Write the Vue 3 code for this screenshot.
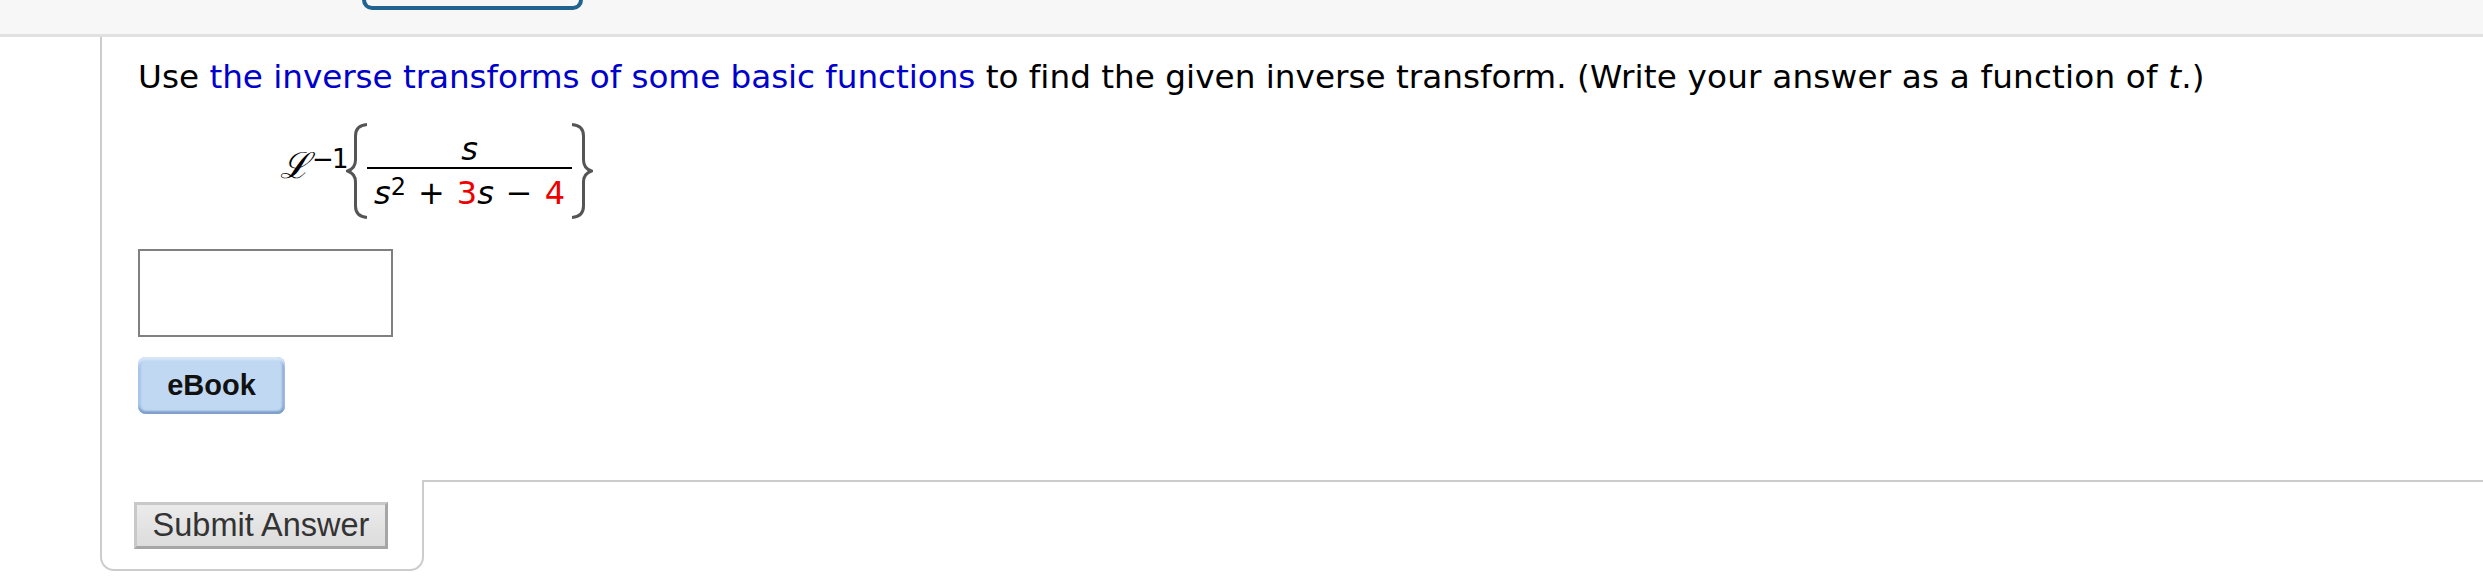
<script setup>
// question panel, static content
const link = 'the inverse transforms of some basic functions'
</script>

<template>
  <div class="page">
    <div class="topbar">
      <div class="tab"></div>
    </div>

    <div class="body">
      <p class="question">
        Use <a class="link">{{ link }}</a> to find the given inverse transform. <span class="hint">(Write your answer as a function of <i>t</i>.)</span>
      </p>

      <div class="math">
        <span class="script">ℒ</span>
        <span class="sup"><span class="minus">−</span><span class="one">1</span></span>
        <svg class="brace" width="22" height="96" viewBox="0 0 22 96">
          <path d="M21 1.5C14 2 9.5 5 9.5 13V37C9.5 43 6 46.5 1.5 48C6 49.5 9.5 53 9.5 59V83C9.5 91 14 94 21 94.5" />
        </svg>
        <div class="fraction">
          <div class="num"><i>s</i></div>
          <div class="den">
            <i>s</i><sup>2</sup><span class="op plus">+</span><span class="red">3</span><i>s</i><span class="op">−</span><span class="red">4</span>
          </div>
        </div>
        <svg class="brace" width="22" height="96" viewBox="0 0 22 96">
          <path d="M1 1.5C8 2 12.5 5 12.5 13V37C12.5 43 16 46.5 20.5 48C16 49.5 12.5 53 12.5 59V83C12.5 91 8 94 1 94.5" />
        </svg>
      </div>

      <input class="answer" type="text" />

      <button class="ebook" type="button">eBook</button>
    </div>

    <div class="footer">
      <div class="submit-tab">
        <button class="submit" type="button">Submit Answer</button>
      </div>
      <div class="filler"></div>
    </div>
  </div>
</template>

<style scoped>
.page {
  width: 2483px;
  height: 582px;
  background: #fff;
  overflow: hidden;
  font-family: "DejaVu Sans", Verdana, sans-serif;
  font-variant-ligatures: none;
  color: #000;
}

.topbar {
  height: 34px;
  padding-left: 362px;
  background: #f7f7f7;
  border-bottom: 3px solid #e1e1e1;
}

.tab {
  width: 221px;
  height: 10px;
  box-sizing: border-box;
  border: 4px solid #21628f;
  border-top: none;
  border-radius: 0 0 10px 10px;
}

.body {
  margin-left: 100px;
  height: 443px;
  box-sizing: border-box;
  padding: 21px 0 0 36px;
  border-left: 2px solid #ccc;
  display: flex;
  flex-direction: column;
  align-items: flex-start;
}

.question {
  margin: 0;
  font-size: 32.7px;
  line-height: 39px;
  white-space: nowrap;
}

.link {
  color: #0000cc;
  letter-spacing: -0.07px;
}

.hint {
  letter-spacing: 0.16px;
}

.math {
  display: flex;
  align-items: center;
  margin: 26px 0 0 142px;
  height: 96px;
  font-size: 32px;
}

.script {
  width: 32px;
  font-family: "DejaVu Serif", serif;
  font-style: italic;
  font-size: 36px;
  line-height: 1;
  margin-top: -10px;
}

.sup {
  display: flex;
  align-items: center;
  width: 34px;
  margin-top: -24px;
  font-size: 26px;
  line-height: 1;
}

.minus {
  width: 20px;
}

.brace {
  flex: none;
}

.brace path {
  fill: none;
  stroke: #555;
  stroke-width: 3;
}

.fraction {
  width: 205px;
  margin: 0 -1px;
  text-align: center;
  line-height: 38px;
}

.num {
  box-sizing: border-box;
  height: 43px;
  padding-top: 4px;
  border-bottom: 2px solid #000;
}

.den {
  display: flex;
  justify-content: center;
  box-sizing: border-box;
  height: 47px;
  padding-top: 5px;
  white-space: nowrap;
}

.den sup {
  font-size: 24px;
  line-height: 1;
  margin-top: 1px;
}

.op {
  margin: 0 12px;
}

.red {
  color: #ee0000;
}

.answer {
  width: 255px;
  height: 88px;
  box-sizing: border-box;
  margin: 30px 0 0;
  padding: 0;
  border: 2px solid #808080;
  background: #fff;
  outline: none;
}

.ebook {
  width: 147px;
  height: 57px;
  margin-top: 20px;
  padding: 0;
  border: none;
  border-radius: 8px;
  background: #c0d8f2;
  box-shadow: inset 0 3px 2px #d8e6f7, inset 0 -3px 2px #7f9fcb, inset 3px 0 2px #a8c6ea, inset -3px 0 2px #90b0da;
  color: #111;
  font-family: "Liberation Sans", Arial, sans-serif;
  font-size: 29px;
  font-weight: 700;
}

.footer {
  display: flex;
  height: 102px;
}

.submit-tab {
  width: 324px;
  height: 91px;
  margin-left: 100px;
  box-sizing: border-box;
  padding: 22px 0 0 32px;
  border: 2px solid #ccc;
  border-top: none;
  border-radius: 0 0 14px 14px;
}

.filler {
  flex: 1;
  height: 0;
  border-top: 2px solid #ccc;
}

.submit {
  width: 254px;
  height: 47px;
  padding: 0;
  border: 3px solid #c8c8c8;
  border-bottom-color: #a6a6a6;
  border-right-color: #a6a6a6;
  background: linear-gradient(#ebebeb, #dcdcdc);
  color: #333;
  font-family: "Liberation Sans", Arial, sans-serif;
  font-size: 32.5px;
  line-height: 1;
}
</style>

<style>
body {
  background: #fff;
}
</style>
